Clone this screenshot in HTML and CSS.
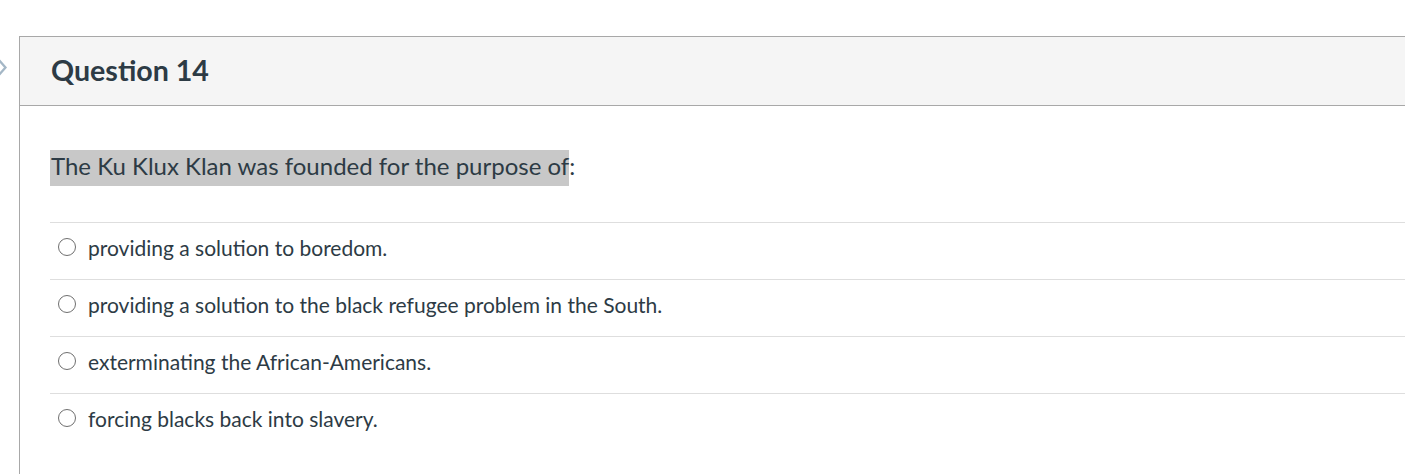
FILE: index.html
```html
<!DOCTYPE html>
<html>
<head>
<meta charset="utf-8">
<link rel="stylesheet" href="styles.css">
</head>
<body>
<div class="page">
  <div class="gutter">
    <svg class="chevron" width="10" height="17" viewBox="0 0 10 17"><path d="M-1 1 L5.5 8.5 L-1 16" fill="none" stroke="#a4b7c6" stroke-width="2.3"/></svg>
  </div>
  <div class="question">
    <div class="header"><h2 class="title">Question 14</h2></div>
    <div class="content">
      <p class="qtext"><span class="hl">The Ku Klux Klan was founded for the purpose of</span>:</p>
      <ul class="answers">
        <li class="answer"><span class="radio"></span><span class="label">providing a solution to boredom.</span></li>
        <li class="answer"><span class="radio"></span><span class="label">providing a solution to the black refugee problem in the South.</span></li>
        <li class="answer"><span class="radio"></span><span class="label">exterminating the African-Americans.</span></li>
        <li class="answer"><span class="radio"></span><span class="label">forcing blacks back into slavery.</span></li>
      </ul>
    </div>
  </div>
</div>
</body>
</html>
```
FILE: styles.css
```css
html, body {
  margin: 0;
  padding: 0;
  background: #fff;
  font-family: Lato, "Open Sans", sans-serif;
  color: #2d3b45;
  overflow: hidden;
}
.page {
  display: flex;
  padding-top: 36px;
  height: 474px;
  box-sizing: border-box;
}
.gutter {
  width: 19px;
  flex: 0 0 19px;
  padding-top: 23px;
}
.chevron {
  display: block;
}
.question {
  flex: 1;
  border: 1px solid #a8a8a8;
  border-right: none;
  border-bottom: none;
}
.header {
  height: 69px;
  background: #f5f5f5;
  border-bottom: 1px solid #a8a8a8;
  display: flex;
  align-items: center;
  padding-left: 31px;
  padding-bottom: 3px;
  box-sizing: border-box;
}
.title {
  margin: 0;
  font-size: 28.6px;
  font-weight: 700;
  color: #2d3b45;
}
.content {
  padding: 44px 0 0 30px;
}
.qtext {
  margin: 0;
  font-size: 24px;
  line-height: 32px;
}
.hl {
  display: inline-block;
  background: #c8c8c8;
  padding-left: 1px;
  padding-bottom: 4px;
}
.answers {
  list-style: none;
  margin: 36px 0 0;
  padding: 0;
}
.answer {
  border-top: 1px solid #dedede;
  height: 57px;
  display: flex;
  align-items: center;
  padding-left: 8px;
  padding-bottom: 8px;
  box-sizing: border-box;
}
.radio {
  width: 16px;
  height: 16px;
  border: 1.5px solid #6f6f6f;
  border-radius: 50%;
  flex: 0 0 auto;
}
.label {
  margin-left: 12px;
  font-size: 21px;
}
```
